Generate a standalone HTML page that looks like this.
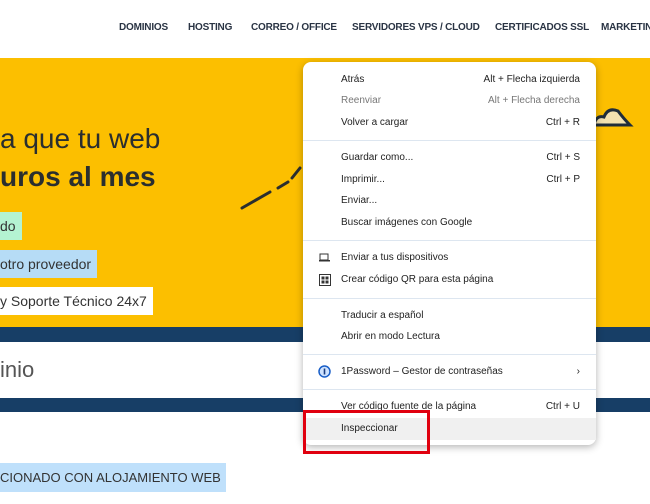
<!DOCTYPE html>
<html><head><meta charset="utf-8"><style>
*{margin:0;padding:0;box-sizing:border-box}
body{width:650px;height:504px;overflow:hidden;position:relative;background:#fff;font-family:"Liberation Sans",sans-serif;color:#333}
.nav{position:absolute;top:22px;font-size:10px;font-weight:bold;color:#2a3444;letter-spacing:-0.2px;white-space:nowrap}
.y{position:absolute;top:58px;left:0;width:650px;height:269px;background:#fcbf00}
.navy{position:absolute;left:0;width:650px;background:#173e66}
.h{position:absolute;left:0;font-size:28px;color:#2a2e2f;white-space:nowrap}
.tag{position:absolute;left:0;height:28px;font-size:14px;line-height:28px;padding-right:6px;color:#333;white-space:nowrap}
.menu{position:absolute;left:303px;top:62px;width:293px;height:383px;background:#fff;border-radius:8px;box-shadow:0 2px 8px rgba(0,0,0,.3);font-size:10px;color:#222}
.it{position:absolute;left:38px;right:16px;height:22px;line-height:22px;white-space:nowrap}
.it span{position:absolute;right:0;top:0}
.sep{position:absolute;left:0;right:0;height:1px;background:#dde6f0}
</style></head><body>
<div class="nav" style="left:119px">DOMINIOS</div>
<div class="nav" style="left:188px">HOSTING</div>
<div class="nav" style="left:251px">CORREO / OFFICE</div>
<div class="nav" style="left:352px">SERVIDORES VPS / CLOUD</div>
<div class="nav" style="left:495px">CERTIFICADOS SSL</div>
<div class="nav" style="left:601px">MARKETING</div>
<div class="y"></div>
<div class="h" style="top:123px">a que tu web</div>
<div class="h" style="top:161px;font-weight:bold">uros al mes</div>
<div class="tag" style="top:212px;background:#b4f3d2">do</div>
<div class="tag" style="top:250px;background:#b6dcf6">otro proveedor</div>
<div class="tag" style="top:287px;background:#fff">y Soporte Técnico 24x7</div>
<svg style="position:absolute;left:230px;top:160px" width="80" height="60"><path d="M12 48 L40 32 M48 28 L58 22 M62 18 L70 8" stroke="#2a2e2f" stroke-width="3" stroke-linecap="round" fill="none"/></svg>
<svg style="position:absolute;left:590px;top:105px" width="60" height="30"><path d="M4 20 Q6 10 14 12 Q18 2 28 6 Q34 14 40 20 Z" fill="#f3e2b0" stroke="#1f2d3a" stroke-width="3"/></svg>
<div class="navy" style="top:327px;height:15px"></div>
<div style="position:absolute;left:0;top:357px;font-size:22px;color:#555">inio</div>
<div class="navy" style="top:398px;height:14px"></div>
<div style="position:absolute;left:0;top:463px;height:29px;width:226px;background:#bfe0fb;font-size:13px;line-height:29px;color:#333;white-space:nowrap;overflow:hidden">CIONADO CON ALOJAMIENTO WEB</div>
<div class="menu">
<div class="it" style="top:7px">Atrás<span>Alt + Flecha izquierda</span></div>
<div class="it" style="top:28px;color:#777">Reenviar<span>Alt + Flecha derecha</span></div>
<div class="it" style="top:50px">Volver a cargar<span>Ctrl + R</span></div>
<div class="sep" style="top:78px"></div>
<div class="it" style="top:85px">Guardar como...<span>Ctrl + S</span></div>
<div class="it" style="top:107px">Imprimir...<span>Ctrl + P</span></div>
<div class="it" style="top:128px">Enviar...</div>
<div class="it" style="top:150px">Buscar imágenes con Google</div>
<div class="sep" style="top:178px"></div>
<svg style="position:absolute;left:16px;top:191px" width="12" height="10"><rect x="1" y="1" width="8" height="6" fill="none" stroke="#333"/><rect x="0" y="7" width="11" height="1.5" fill="#333"/></svg>
<div class="it" style="top:185px">Enviar a tus dispositivos</div>
<svg style="position:absolute;left:16px;top:212px" width="12" height="12"><rect x="0.5" y="0.5" width="11" height="11" fill="none" stroke="#333"/><rect x="2.5" y="2.5" width="3" height="3" fill="#333"/><rect x="6.5" y="2.5" width="3" height="3" fill="#333"/><rect x="2.5" y="6.5" width="3" height="3" fill="#333"/><rect x="6.5" y="6.5" width="3" height="3" fill="#333"/></svg>
<div class="it" style="top:207px">Crear código QR para esta página</div>
<div class="sep" style="top:236px"></div>
<div class="it" style="top:243px">Traducir a español</div>
<div class="it" style="top:264px">Abrir en modo Lectura</div>
<div class="sep" style="top:292px"></div>
<svg style="position:absolute;left:15px;top:303px" width="13" height="13"><circle cx="6.5" cy="6.5" r="5.5" fill="#cfe3ff" stroke="#1a5fc8" stroke-width="1.5"/><rect x="5.7" y="3.5" width="1.6" height="6" fill="#1a3d80"/></svg>
<div class="it" style="top:299px">1Password – Gestor de contraseñas<span>›</span></div>
<div class="sep" style="top:327px"></div>
<div class="it" style="top:334px">Ver código fuente de la página<span>Ctrl + U</span></div>
<div style="position:absolute;left:0;right:0;top:356px;height:22px;background:#f0f0f0"></div>
<div class="it" style="top:356px">Inspeccionar</div>
</div>
<div style="position:absolute;left:303px;top:410px;width:127px;height:44px;border:3px solid #e0000f"></div>
</body></html>
